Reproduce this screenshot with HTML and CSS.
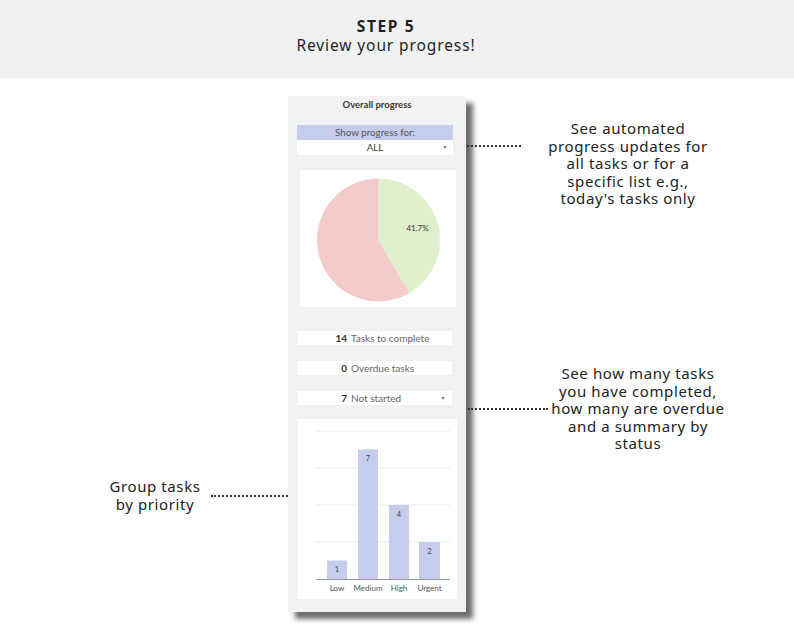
FILE: index.html
```html
<!DOCTYPE html>
<html lang="en">
<head>
<meta charset="utf-8">
<title>Step 5</title>
<link rel="stylesheet" href="styles.css">
</head>
<body>
<header class="header">
  <div class="step">STEP 5</div>
  <div class="subtitle">Review your progress!</div>
</header>
<main class="main">
  <div class="col-left">
    <div class="note note-left">
      <div class="note-text">Group tasks<br>by priority</div>
      <div class="dots dots-left"></div>
    </div>
  </div>

  <section class="panel">
    <div class="panel-title">Overall progress</div>
    <div class="select">
      <div class="select-label">Show progress for:</div>
      <div class="select-value">ALL<span class="caret"></span></div>
    </div>
    <div class="card pie-card">
      <svg width="156" height="137" viewBox="0 0 156 137">
        <path d="M78.5 70 L78.5 8.5 A61.5 61.5 0 0 1 109.25 123.26 Z" fill="#e0f0cd"/>
        <path d="M78.5 70 L109.25 123.26 A61.5 61.5 0 1 1 78.5 8.5 Z" fill="#f4cbcb"/>
        <text x="117.5" y="61" class="pie-label" text-anchor="middle">41.7%</text>
      </svg>
    </div>
    <div class="stat stat-first"><span class="num">14</span><span class="lbl">Tasks to complete</span></div>
    <div class="stat"><span class="num">0</span><span class="lbl">Overdue tasks</span></div>
    <div class="stat"><span class="num">7</span><span class="lbl">Not started</span><span class="caret"></span></div>
    <div class="card bar-card">
      <svg width="159" height="180" viewBox="0 0 159 180">
        <g stroke="#ececec" stroke-width="1">
          <line x1="18" y1="12" x2="152" y2="12"/>
          <line x1="18" y1="49" x2="152" y2="49"/>
          <line x1="18" y1="86" x2="152" y2="86"/>
          <line x1="18" y1="123" x2="152" y2="123"/>
        </g>
        <g fill="#c6cceb">
          <rect x="29" y="141.5" width="20" height="18.5"/>
          <rect x="60" y="30.5" width="20" height="129.5"/>
          <rect x="91" y="86" width="20" height="74"/>
          <rect x="121" y="123" width="21" height="37"/>
        </g>
        <line x1="18" y1="160.5" x2="152" y2="160.5" stroke="#9a9a9a" stroke-width="1"/>
        <g class="bar-val" text-anchor="middle">
          <text x="39" y="153">1</text>
          <text x="70" y="42">7</text>
          <text x="101" y="98">4</text>
          <text x="131.5" y="135">2</text>
        </g>
        <g class="bar-axis" text-anchor="middle">
          <text x="39" y="172">Low</text>
          <text x="70" y="172">Medium</text>
          <text x="101" y="172">High</text>
          <text x="131.5" y="172">Urgent</text>
        </g>
      </svg>
    </div>
  </section>

  <div class="col-right">
    <div class="note note-r1">
      <div class="dots dots-r1"></div>
      <div class="note-text text-r1">See automated<br>progress updates for<br>all tasks or for a<br>specific list e.g.,<br>today's tasks only</div>
    </div>
    <div class="note note-r2">
      <div class="dots dots-r2"></div>
      <div class="note-text text-r2">See how many tasks<br>you have completed,<br>how many are overdue<br>and a summary by<br>status</div>
    </div>
  </div>
</main>
</body>
</html>
```

FILE: styles.css
```css
* { box-sizing: border-box; }
html, body { margin: 0; padding: 0; background: #ffffff; }
body {
  font-family: "Noto Sans", "DejaVu Sans", sans-serif;
  color: #1f1f1f;
  width: 794px;
  height: 635px;
  overflow: hidden;
}
.header {
  height: 78px;
  background: #f0f1f3;
  text-align: center;
  padding-top: 17px;
  padding-right: 22px;
  font-size: 15.5px;
  line-height: 19px;
  letter-spacing: 0.9px;
}
.step { font-weight: 700; letter-spacing: 1.6px; }

.main {
  display: grid;
  grid-template-columns: 288px 178px 1fr;
  padding-top: 18px;
}

/* annotations */
.note { display: flex; align-items: flex-start; }
.note-text {
  font-size: 15px;
  line-height: 17.6px;
  letter-spacing: 0.6px;
  text-align: center;
  white-space: nowrap;
  color: #222;
}
.dots { height: 0; border-top: 2px dotted #333; }
.note-left {
  margin-top: 382px;
  justify-content: flex-end;
}
.note-left .note-text { width: 112px; }
.dots-left { width: 77px; margin-top: 17px; margin-left: 0; }

.note-r1 { margin-top: 24px; }
.dots-r1 { width: 54px; margin-left: 1px; margin-top: 25px; }
.text-r1 { width: 214px; }
.note-r2 { margin-top: 157px; }
.dots-r2 { width: 80px; margin-left: 2px; margin-top: 43px; }
.text-r2 { width: 180px; }

/* panel */
.panel {
  background: #f2f2f2;
  height: 516px;
  padding: 0 10px 0 10px;
  box-shadow: 7px 7px 5px rgba(60, 60, 60, 0.75);
  font-family: "Lato", "Noto Sans", sans-serif;
}
.panel-title {
  text-align: center;
  font-size: 9.5px;
  font-weight: 700;
  color: #3a3a3a;
  padding-top: 2px;
  height: 29px;
  line-height: 13px;
}
.select { margin-right: 3px; margin-left: -1px; }
.select-label {
  background: #c6cceb;
  height: 15px;
  line-height: 15px;
  text-align: center;
  font-size: 9.8px;
  color: #555;
}
.select-value {
  position: relative;
  background: #fff;
  height: 15px;
  line-height: 15px;
  text-align: center;
  font-size: 9.8px;
  color: #444;
}
.caret {
  position: absolute;
  right: 6px;
  top: 6px;
  width: 0; height: 0;
  border-left: 2.5px solid transparent;
  border-right: 2.5px solid transparent;
  border-top: 3px solid #888;
}
.card { background: #fff; }
.pie-card {
  margin-top: 15px;
  margin-left: 2px;
  width: 156px;
  height: 137px;
}
.pie-card svg, .bar-card svg { display: block; }
.pie-label { font-size: 8px; fill: #333; font-family: "Lato", "Noto Sans", sans-serif; }

.stat {
  position: relative;
  display: flex;
  align-items: center;
  background: #fff;
  height: 14px;
  width: 154px;
  margin-top: 16px;
  font-size: 10px;
}
.stat-first { margin-top: 24px; }
.stat .num {
  width: 49px;
  text-align: right;
  font-weight: 700;
  color: #333;
}
.stat .lbl { margin-left: 4px; color: #666; }
.stat .caret { top: 6px; right: 7px; }

.bar-card {
  margin-top: 14px;
  width: 159px;
  height: 180px;
}
.bar-val text { font-size: 7.5px; fill: #444; font-family: "Lato", "Noto Sans", sans-serif; }
.bar-axis text { font-size: 8px; fill: #555; font-family: "Lato", "Noto Sans", sans-serif; }
```
